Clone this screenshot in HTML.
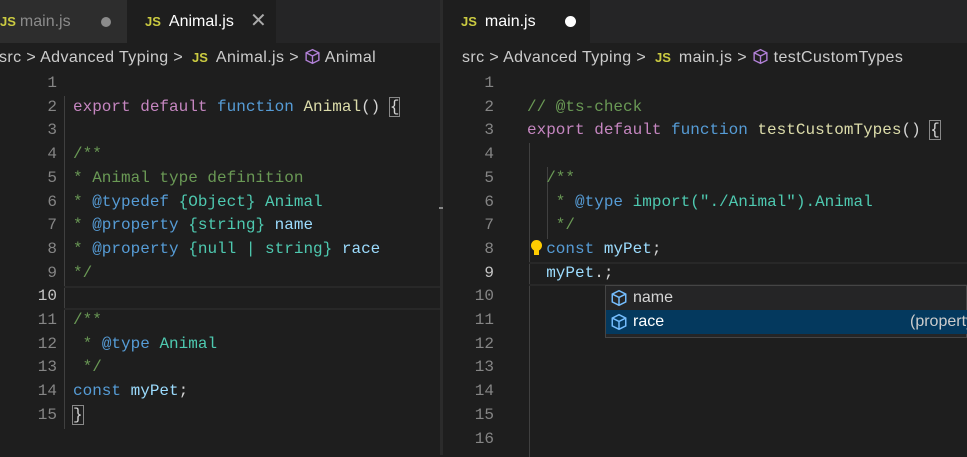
<!DOCTYPE html>
<html><head><meta charset="utf-8"><style>
*{margin:0;padding:0;box-sizing:border-box}
body{width:967px;height:455px;background:#1e1e1e;overflow:hidden;position:relative;font-family:"Liberation Sans",sans-serif}
.bar{position:absolute;top:0;height:43px;background:#252526}
.tab{position:absolute;top:0;height:43px;font-size:16px;line-height:43px;color:#fff}
.js{color:#cbcb41;font-weight:bold;font-size:13px;margin-right:8px;letter-spacing:0}
.bc{position:absolute;top:46px;height:24px;font-size:16px;color:#cccccc;line-height:24px;white-space:nowrap;letter-spacing:0.4px}
.bc svg{vertical-align:-3px}
.code{position:absolute;font-family:"Liberation Mono",monospace;font-size:16px;white-space:pre}
.ln{position:absolute;width:40px;text-align:right;color:#858585;font-family:"Liberation Mono",monospace;font-size:16px}
.l{position:absolute;height:23.7px;line-height:23.7px}
.k{color:#c586c0}.f{color:#569cd6}.fn{color:#dcdcaa}.c{color:#6a9955}.t{color:#4ec9b0}.v{color:#9cdcfe}.p{color:#d4d4d4}
.guide{position:absolute;width:1px;background:#404040}
.cur{position:absolute;height:24px;border-top:2px solid #282828;border-bottom:2px solid #282828}
</style></head><body>
<div class="bar" style="left:0;width:440px"></div>
<div class="bar" style="left:443px;width:524px"></div>
<div style="position:absolute;left:440px;top:0;width:3px;height:455px;background:#2b2b2b"></div>
<div class="tab" style="left:0;width:127px;background:#2d2d2d;color:#8b8b8b;padding-left:0"><span class="js" style="margin-right:4px">JS</span>main.js<span style="position:absolute;left:101px;top:17px;width:10px;height:10px;border-radius:50%;background:#8b8b8b"></span></div>
<div class="tab" style="left:127px;width:149px;background:#1e1e1e;padding-left:18px"><span class="js">JS</span>Animal.js<span style="position:absolute;left:123px;top:0;color:#aaa;font-size:20px">✕</span></div>
<div class="tab" style="left:443px;width:147px;background:#1e1e1e;padding-left:18px"><span class="js">JS</span>main.js<span style="position:absolute;left:122px;top:16px;width:11px;height:11px;border-radius:50%;background:#fff"></span></div>

<div class="bc" style="left:-1px">src &gt; Advanced Typing &gt; <span class="js" style="margin-left:4px">JS</span>Animal.js &gt; <svg width="17" height="17" viewBox="0 0 16 16"><path d="M8 1.5 14 4.5v7L8 14.5 2 11.5v-7z M2 4.5 8 7.5 14 4.5 M8 7.5v7" fill="none" stroke="#b180d7" stroke-width="1.3"/></svg> Animal</div>
<div class="bc" style="left:462px">src &gt; Advanced Typing &gt; <span class="js" style="margin-left:4px">JS</span>main.js &gt; <svg width="17" height="17" viewBox="0 0 16 16"><path d="M8 1.5 14 4.5v7L8 14.5 2 11.5v-7z M2 4.5 8 7.5 14 4.5 M8 7.5v7" fill="none" stroke="#b180d7" stroke-width="1.3"/></svg> testCustomTypes</div>

<!-- left -->
<div class="guide" style="left:64px;top:96px;height:333px"></div>
<div class="cur" style="left:64px;top:286px;width:376px"></div>
<div style="position:absolute;left:439px;top:207px;width:4px;height:2px;background:#888"></div>
<div class="ln" style="left:17px;top:72px">
<div class="l" style="top:0;right:0">1</div><div class="l" style="top:23.7px;right:0">2</div><div class="l" style="top:47.4px;right:0">3</div><div class="l" style="top:71.1px;right:0">4</div><div class="l" style="top:94.8px;right:0">5</div><div class="l" style="top:118.5px;right:0">6</div><div class="l" style="top:142.2px;right:0">7</div><div class="l" style="top:165.9px;right:0">8</div><div class="l" style="top:189.6px;right:0">9</div><div class="l" style="top:213.3px;right:0;color:#c6c6c6">10</div><div class="l" style="top:237px;right:0">11</div><div class="l" style="top:260.7px;right:0">12</div><div class="l" style="top:284.4px;right:0">13</div><div class="l" style="top:308.1px;right:0">14</div><div class="l" style="top:331.8px;right:0">15</div>
</div>
<div class="code" style="left:73px;top:72px">
<div class="l" style="top:23.7px"><span class="k">export default</span> <span class="f">function</span> <span class="fn">Animal</span><span class="p">() <span style="outline:1px solid #888">{</span></span></div>
<div class="l c" style="top:71.1px">/**</div>
<div class="l c" style="top:94.8px">* Animal type definition</div>
<div class="l" style="top:118.5px"><span class="c">* </span><span class="f">@typedef</span> <span class="t">{Object} Animal</span></div>
<div class="l" style="top:142.2px"><span class="c">* </span><span class="f">@property</span> <span class="t">{string}</span> <span class="v">name</span></div>
<div class="l" style="top:165.9px"><span class="c">* </span><span class="f">@property</span> <span class="t">{null | string}</span> <span class="v">race</span></div>
<div class="l c" style="top:189.6px">*/</div>
<div class="l c" style="top:237px">/**</div>
<div class="l" style="top:260.7px"><span class="c"> * </span><span class="f">@type</span> <span class="t">Animal</span></div>
<div class="l c" style="top:284.4px"> */</div>
<div class="l" style="top:308.1px"><span class="f">const</span> <span class="v">myPet</span><span class="p">;</span></div>
<div class="l p" style="top:331.8px"><span style="outline:1px solid #888">}</span></div>
</div>

<!-- right -->
<div class="guide" style="left:529px;top:143px;height:314px"></div>
<div class="guide" style="left:547px;top:167px;height:72px"></div>
<div class="cur" style="left:529px;top:262px;width:438px"></div>
<div class="ln" style="left:454px;top:72px">
<div class="l" style="top:0;right:0">1</div><div class="l" style="top:23.7px;right:0">2</div><div class="l" style="top:47.4px;right:0">3</div><div class="l" style="top:71.1px;right:0">4</div><div class="l" style="top:94.8px;right:0">5</div><div class="l" style="top:118.5px;right:0">6</div><div class="l" style="top:142.2px;right:0">7</div><div class="l" style="top:165.9px;right:0">8</div><div class="l" style="top:189.6px;right:0;color:#c6c6c6">9</div><div class="l" style="top:213.3px;right:0">10</div><div class="l" style="top:237px;right:0">11</div><div class="l" style="top:260.7px;right:0">12</div><div class="l" style="top:284.4px;right:0">13</div><div class="l" style="top:308.1px;right:0">14</div><div class="l" style="top:331.8px;right:0">15</div><div class="l" style="top:355.5px;right:0">16</div>
</div>
<div class="code" style="left:527px;top:72px">
<div class="l c" style="top:23.7px">// @ts-check</div>
<div class="l" style="top:47.4px"><span class="k">export default</span> <span class="f">function</span> <span class="fn">testCustomTypes</span><span class="p">() <span style="outline:1px solid #888">{</span></span></div>
<div class="l c" style="top:94.8px">  /**</div>
<div class="l" style="top:118.5px"><span class="c">   * </span><span class="f">@type</span> <span class="t">import("./Animal").Animal</span></div>
<div class="l c" style="top:142.2px">   */</div>
<div class="l" style="top:165.9px">  <span class="f">const</span> <span class="v">myPet</span><span class="p">;</span></div>
<div class="l" style="top:189.6px">  <span class="v">myPet</span><span class="p">.;</span></div>
</div>
<div style="position:absolute;left:531px;top:240px;width:11px;height:11px;border-radius:50%;background:#ffcc00"></div>
<div style="position:absolute;left:534px;top:250px;width:5px;height:5px;background:#ffcc00"></div>
<div style="position:absolute;left:605px;top:285px;width:362px;height:53px;background:#252526;border:1px solid #454545"></div>
<div style="position:absolute;left:606px;top:310px;width:361px;height:24px;background:#04395e"></div>
<svg style="position:absolute;left:610px;top:289px" width="18" height="18" viewBox="0 0 16 16"><path d="M8 1.5 14 4.5v7L8 14.5 2 11.5v-7z M2 4.5 8 7.5 14 4.5 M8 7.5v7" fill="none" stroke="#75beff" stroke-width="1.3"/></svg>
<svg style="position:absolute;left:610px;top:313px" width="18" height="18" viewBox="0 0 16 16"><path d="M8 1.5 14 4.5v7L8 14.5 2 11.5v-7z M2 4.5 8 7.5 14 4.5 M8 7.5v7" fill="none" stroke="#75beff" stroke-width="1.3"/></svg>
<div style="position:absolute;left:633px;top:286px;font-size:16px;line-height:23px;color:#d4d4d4">name</div>
<div style="position:absolute;left:633px;top:310px;font-size:16px;line-height:23px;color:#fff">race</div>
<div style="position:absolute;left:910px;top:310px;font-size:16px;line-height:23px;color:#ccc;white-space:nowrap">(property)</div>
</body></html>
